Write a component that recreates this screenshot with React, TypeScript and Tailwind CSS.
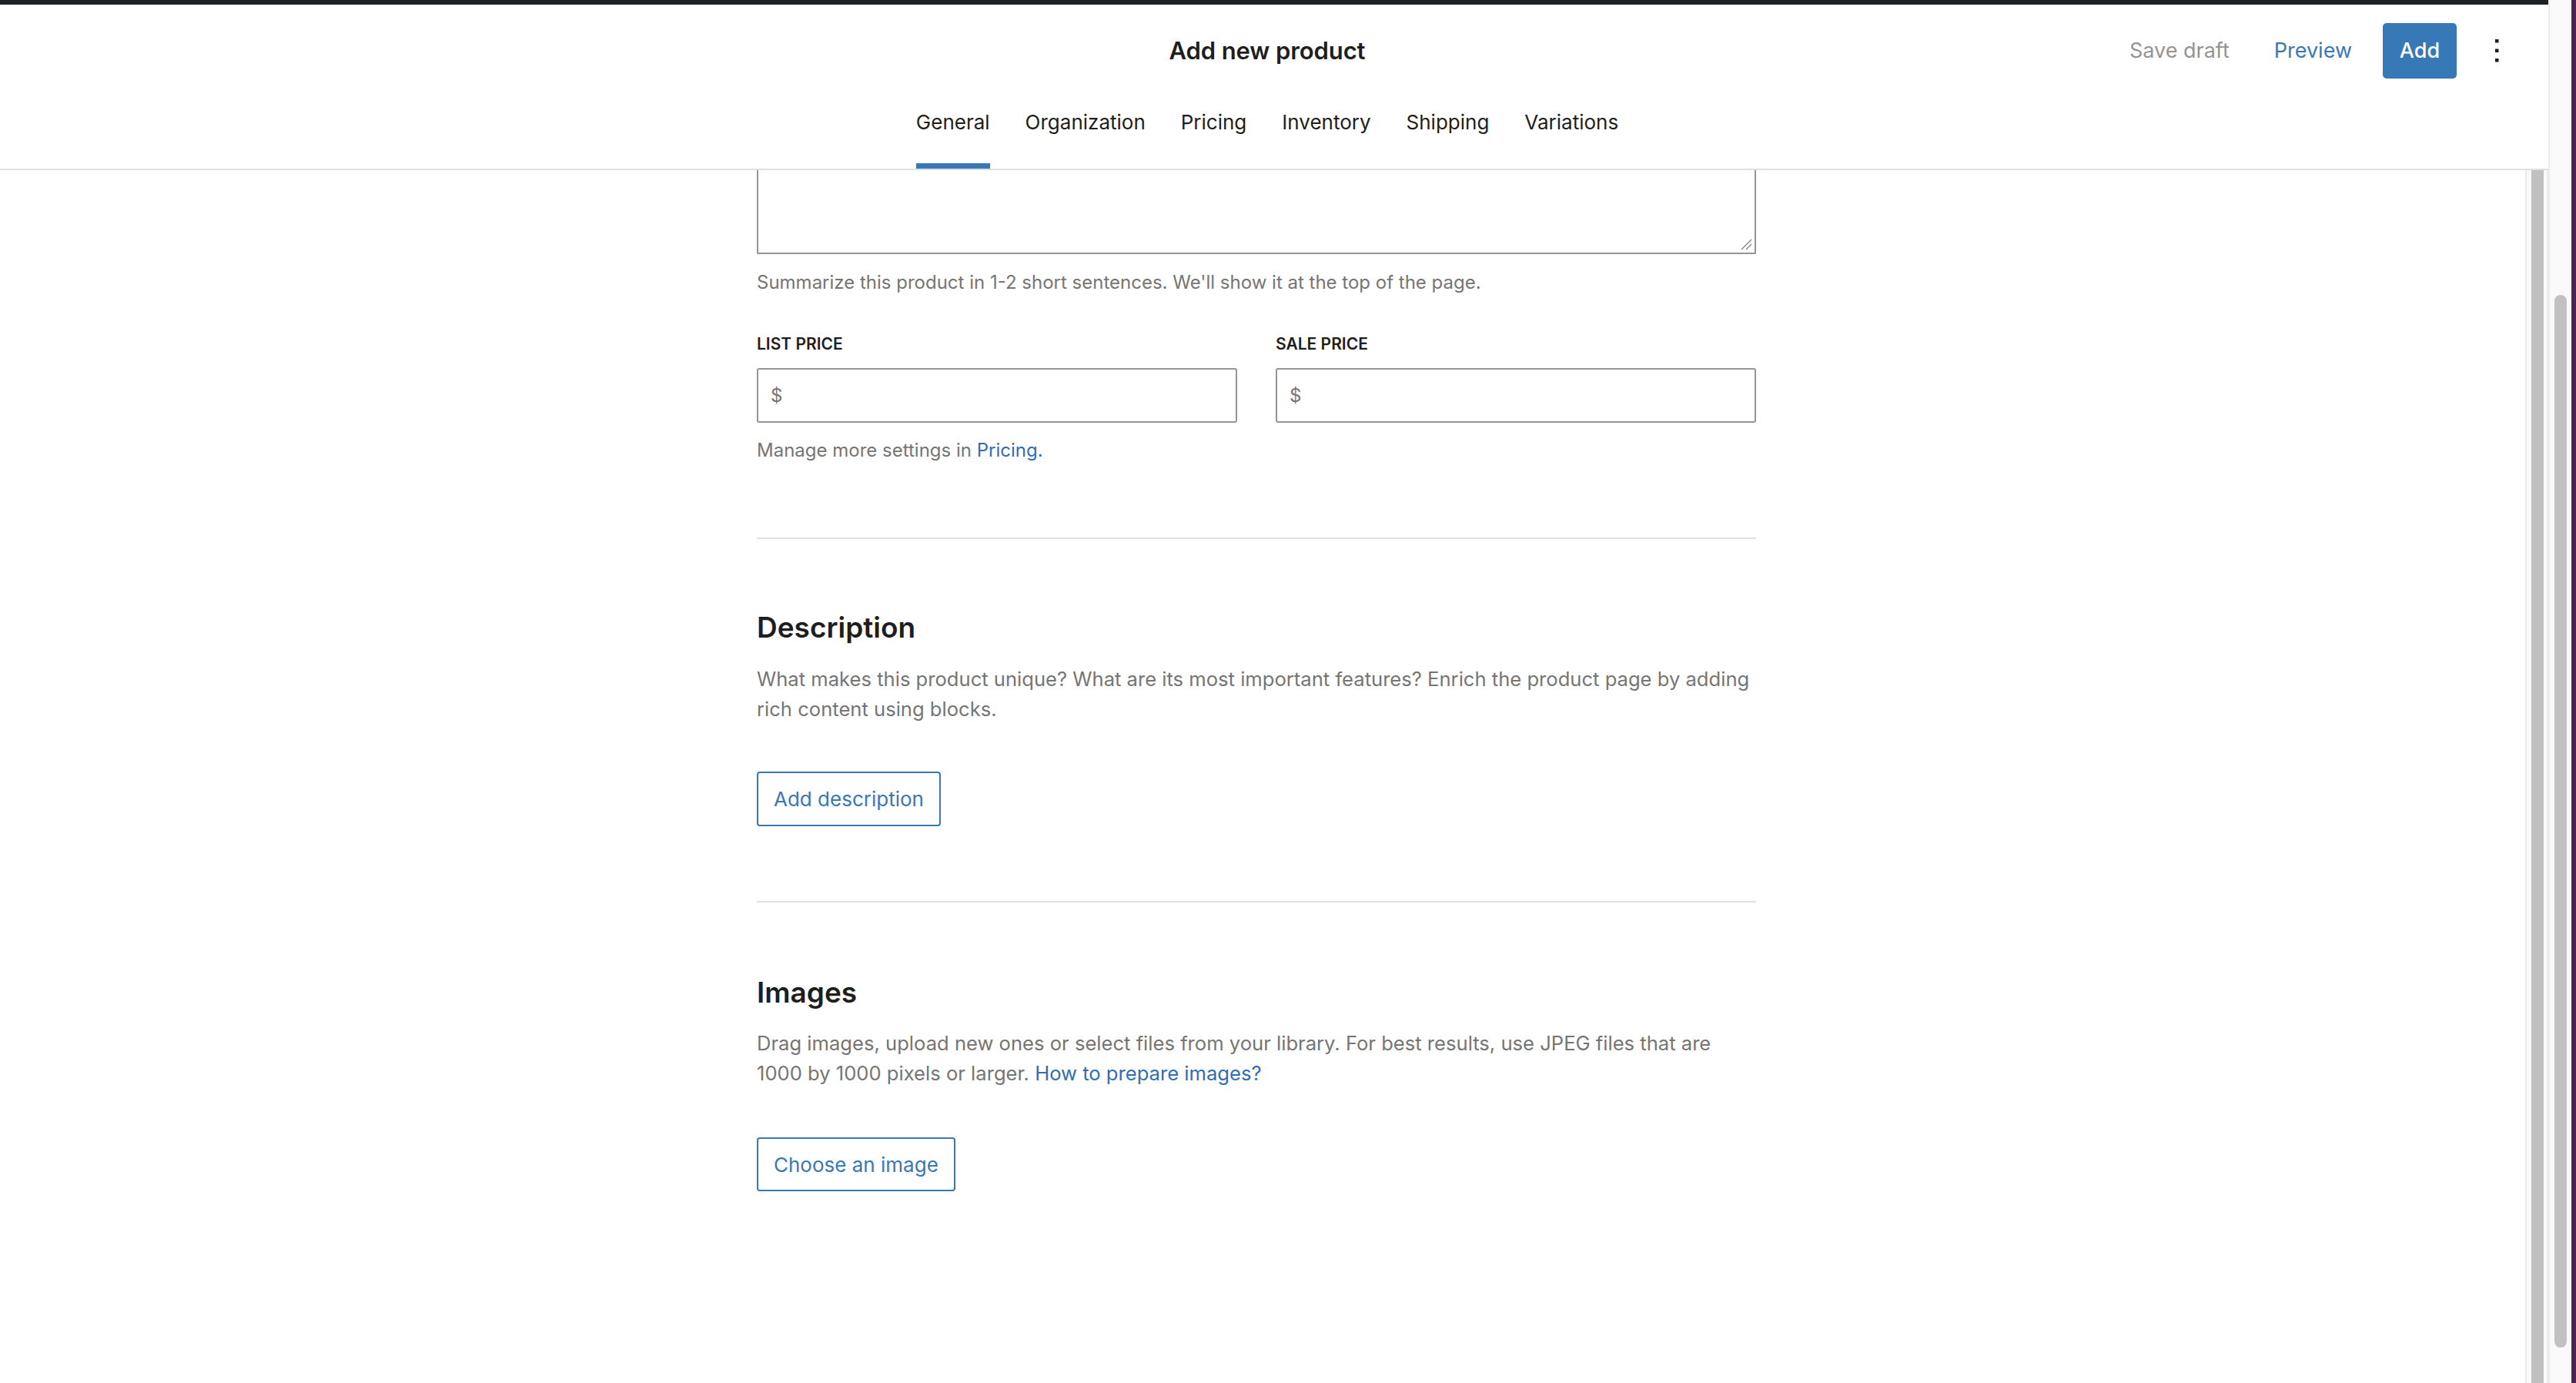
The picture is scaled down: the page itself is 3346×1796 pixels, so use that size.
import React from "react";

const tabs = ["General", "Organization", "Pricing", "Inventory", "Shipping", "Variations"];

function Kebab() {
  return (
    <svg width="8" height="32" viewBox="0 0 8 32" className="block">
      <rect x="2" y="1" width="4.5" height="4.5" fill="#1e1e1e" />
      <rect x="2" y="13.5" width="4.5" height="4.5" fill="#1e1e1e" />
      <rect x="2" y="26" width="4.5" height="4.5" fill="#1e1e1e" />
    </svg>
  );
}

function ResizeHandle() {
  return (
    <svg width="16" height="16" viewBox="0 0 16 16" className="absolute right-[3px] bottom-[3px]">
      <line x1="15" y1="2" x2="2" y2="15" stroke="#8a8a8a" strokeWidth="1.5" />
      <line x1="15" y1="8" x2="8" y2="15" stroke="#8a8a8a" strokeWidth="1.5" />
    </svg>
  );
}

export default function App() {
  return (
    <div className="flex h-screen w-full overflow-hidden bg-white font-['Inter','Noto_Sans',sans-serif] text-[#1e1e1e]">
      <div className="flex min-w-0 flex-1 flex-col">
        <div className="h-[6px] shrink-0 bg-[#1f2225]" />
        <header className="shrink-0 border-b-2 border-[#e0e0e0] bg-white pr-[18px]">
          <div className="grid h-[118px] grid-cols-[1fr_auto_1fr] items-center">
            <div />
            <h1 className="text-[31px] font-semibold leading-none tracking-[-0.1px] text-[#1e1e1e]">Add new product</h1>
            <div className="flex items-center justify-end pt-[2px] pr-[39px]">
              <span className="text-[27px] text-[#949494]">Save draft</span>
              <span className="ml-[58px] text-[27px] text-[#3778b7]">Preview</span>
              <button className="ml-[40px] flex h-[72px] w-[96px] items-center justify-center rounded-[5px] bg-[#3778b7] text-[27px] font-medium text-white">
                Add
              </button>
              <div className="ml-[42px] flex h-[48px] w-[20px] items-center justify-center">
                <Kebab />
              </div>
            </div>
          </div>
          <nav className="flex h-[95px] justify-center gap-[46px]">
            {tabs.map((t, i) => (
              <div key={t} className="flex flex-col items-stretch">
                <span className="pt-[18px] text-[26px] leading-[34px] text-[#1e1e1e]">{t}</span>
                <div className={"mt-auto h-[7px] " + (i === 0 ? "bg-[#3778b7]" : "bg-transparent")} />
              </div>
            ))}
          </nav>
        </header>
        <div className="flex min-h-0 flex-1">
          <main className="min-w-0 flex-1 overflow-hidden pr-[16px]">
            <div className="mx-auto w-[1298px]">
              <div className="relative h-[109px] rounded-b-[2px] border-x-2 border-b-2 border-[#949494]">
                <ResizeHandle />
              </div>
              <p className="mt-[20px] text-[24px] leading-[34px] text-[#757575]">
                Summarize this product in 1-2 short sentences. We'll show it at the top of the page.
              </p>
              <div className="mt-[48px] grid grid-cols-2 gap-[50px]">
                <div>
                  <div className="text-[21px] font-semibold uppercase leading-[30px] text-[#1e1e1e]">List price</div>
                  <div className="mt-[16px] flex h-[71px] items-center rounded-[3px] border-2 border-[#949494] px-[16px] text-[24px] text-[#757575]">
                    $
                  </div>
                </div>
                <div>
                  <div className="text-[21px] font-semibold uppercase leading-[30px] text-[#1e1e1e]">Sale price</div>
                  <div className="mt-[16px] flex h-[71px] items-center rounded-[3px] border-2 border-[#949494] px-[16px] text-[24px] text-[#757575]">
                    $
                  </div>
                </div>
              </div>
              <p className="mt-[19px] text-[24px] leading-[34px] text-[#757575]">
                Manage more settings in <span className="text-[#2f6eb5]">Pricing.</span>
              </p>

              <div className="mt-[96px] h-[2px] bg-[#e0e0e0]" />

              <h2 className="mt-[91px] text-[37px] font-semibold leading-[48px] text-[#1e1e1e]">Description</h2>
              <p className="mt-[23px] text-[25.6px] leading-[39px] text-[#757575]">
                What makes this product unique? What are its most important features? Enrich the product page by adding rich content using blocks.
              </p>
              <button className="mt-[62px] flex h-[71px] items-center rounded-[4px] border-2 border-[#3778b7] px-[20px] text-[26px] text-[#3778b7]">
                Add description
              </button>

              <div className="mt-[97px] h-[2px] bg-[#e0e0e0]" />

              <h2 className="mt-[93px] text-[37px] font-semibold leading-[48px] text-[#1e1e1e]">Images</h2>
              <p className="mt-[22px] text-[25.6px] leading-[39px] text-[#757575]">
                Drag images, upload new ones or select files from your library. For best results, use JPEG files that are 1000 by 1000 pixels or larger.{" "}
                <span className="text-[#2f6eb5]">How to prepare images?</span>
              </p>
              <button className="mt-[64px] flex h-[70px] items-center rounded-[4px] border-2 border-[#3778b7] px-[20px] text-[26px] text-[#3778b7]">
                Choose an image
              </button>
            </div>
          </main>
          <div className="flex w-[30px] shrink-0 border-x-2 border-[#ececec] bg-[#f9f9f9] pl-[6px]">
            <div className="w-[16px] bg-[#c1c1c1]" />
          </div>
        </div>
      </div>
      <div className="relative w-[30px] shrink-0 border-l-2 border-[#ececec] bg-[#f9f9f9]">
        <div className="absolute left-[6px] top-[383px] h-[1367px] w-[16px] rounded-full bg-[#c1c1c1]" />
      </div>
      <div className="w-[6px] shrink-0 bg-[#48264e]" />
    </div>
  );
}
